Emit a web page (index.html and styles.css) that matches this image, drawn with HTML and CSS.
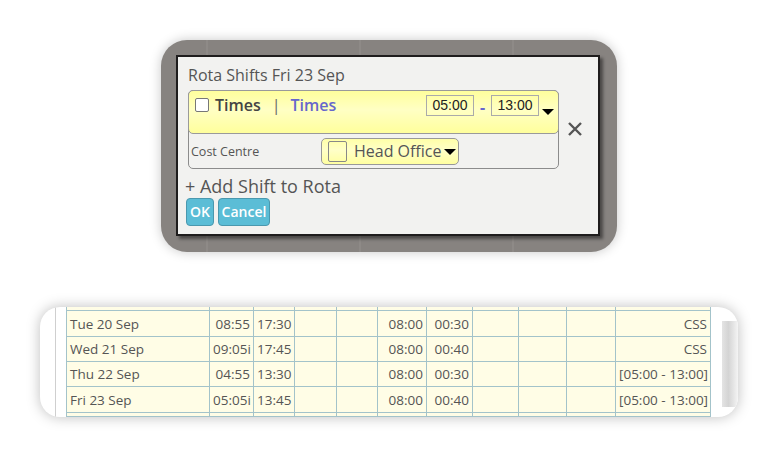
FILE: index.html
```html
<!DOCTYPE html>
<html>
<head>
<meta charset="utf-8">
<link rel="stylesheet" href="styles.css">
</head>
<body>
<div class="stage">
  <div class="frame">
    <div class="dialog">
      <div class="title">Rota Shifts Fri 23 Sep</div>
      <div class="shift-row">
        <div class="shift">
          <div class="shift-head">
            <span class="cb"></span>
            <span class="name">Times</span>
            <span class="sep">|</span>
            <span class="name blue">Times</span>
            <span class="times">
              <span class="tbox">05:00</span><span class="dash">-</span><span class="tbox">13:00</span><span class="arrow"></span>
            </span>
          </div>
          <div class="cost">
            <span class="cost-label">Cost Centre</span>
            <span class="select"><span class="cb big"></span><span class="sel-text">Head Office</span><span class="arrow sel-arrow"></span></span>
          </div>
        </div>
        <svg class="close" width="16" height="16" viewBox="0 0 16 16"><path d="M2 2 L14 14 M14 2 L2 14" stroke="#555" stroke-width="2.4" stroke-linecap="butt" fill="none"/></svg>
      </div>
      <div class="add">+ Add Shift to Rota</div>
      <div class="buttons"><span class="btn ok">OK</span><span class="btn cancel">Cancel</span></div>
    </div>
  </div>

  <div class="sheet">
    <div class="gutter"></div>
    <table class="grid">
      <colgroup>
        <col style="width:143px"><col style="width:44px"><col style="width:41px"><col style="width:42px"><col style="width:41px"><col style="width:49px"><col style="width:46px"><col style="width:46px"><col style="width:48px"><col style="width:49px"><col style="width:95px">
      </colgroup>
      <tr class="part top"><td></td><td></td><td></td><td></td><td></td><td></td><td></td><td></td><td></td><td></td><td></td></tr>
      <tr class="tall"><td class="d">Tue 20 Sep</td><td>08:55</td><td>17:30</td><td></td><td></td><td>08:00</td><td>00:30</td><td></td><td></td><td></td><td>CSS</td></tr>
      <tr><td class="d">Wed 21 Sep</td><td>09:05i</td><td>17:45</td><td></td><td></td><td>08:00</td><td>00:40</td><td></td><td></td><td></td><td>CSS</td></tr>
      <tr><td class="d">Thu 22 Sep</td><td>04:55</td><td>13:30</td><td></td><td></td><td>08:00</td><td>00:30</td><td></td><td></td><td></td><td>[05:00 - 13:00]</td></tr>
      <tr class="tall"><td class="d">Fri 23 Sep</td><td>05:05i</td><td>13:45</td><td></td><td></td><td>08:00</td><td>00:40</td><td></td><td></td><td></td><td>[05:00 - 13:00]</td></tr>
      <tr class="part"><td></td><td></td><td></td><td></td><td></td><td></td><td></td><td></td><td></td><td></td><td></td></tr>
    </table>
    <div class="rspace"></div>
    <div class="band"></div>
  </div>
</div>
</body>
</html>
```
FILE: styles.css
```css
html, body {
  margin: 0;
  padding: 0;
  background: #ffffff;
}
body {
  width: 779px;
  height: 457px;
  overflow: hidden;
  font-family: "Open Sans", "DejaVu Sans", sans-serif;
  color: #555;
}
.stage {
  display: flex;
  flex-direction: column;
  padding-top: 40px;
}
.frame {
  margin-left: 161px;
  width: 456px;
  height: 212px;
  box-sizing: border-box;
  padding: 15px 0 0 15px;
  background-color: #878380;
  background-image: repeating-linear-gradient(to right, transparent 0 45px, rgba(255,255,255,0.06) 45px 47px, transparent 47px 153px);
  border-radius: 26px;
  box-shadow: 0 0 12px rgba(0,0,0,0.22);
}
.dialog {
  width: 424px;
  height: 181px;
  box-sizing: border-box;
  border: 2px solid #1f1d1d;
  background: #f2f2f0;
  padding: 8px 0 0 10px;
  box-shadow: 3px 3px 3px rgba(0,0,0,0.45);
  display: flex;
  flex-direction: column;
  align-items: flex-start;
}
.title {
  font-size: 16px;
  line-height: 21px;
  color: #555;
}
.shift-row {
  margin-top: 4px;
  display: flex;
  align-items: flex-start;
}
.shift {
  width: 371px;
  height: 79px;
  box-sizing: border-box;
  border: 1px solid #8c8c8c;
  border-radius: 5px;
}
.shift-head {
  margin: -1px -1px 0;
  height: 44px;
  box-sizing: border-box;
  border: 1px solid #9a9a9a;
  border-radius: 5px;
  background: linear-gradient(#ffff9c, #ffffc4 45%, #ffff9c);
  display: flex;
  align-items: flex-start;
  padding: 4px 0 0 6px;
}
.cb {
  width: 12px;
  height: 12px;
  border: 1px solid #777;
  border-radius: 2px;
  background: #fff;
  margin-top: 3px;
  flex: none;
}
.name {
  font-size: 16px;
  line-height: 20px;
  font-weight: 600;
  color: #444;
  margin-left: 6px;
}
.sep {
  font-size: 16px;
  line-height: 20px;
  color: #666;
  margin-left: 11px;
}
.name.blue {
  color: #6666cc;
  margin-left: 10px;
}
.times {
  margin-left: auto;
  display: flex;
  align-items: flex-start;
  padding-right: 4px;
}
.tbox {
  width: 48px;
  height: 21px;
  box-sizing: border-box;
  border: 1px solid #aaa;
  font-family: "Liberation Sans", Arial, sans-serif;
  font-size: 14px;
  line-height: 19px;
  color: #222;
  text-align: center;
}
.dash {
  width: 17px;
  text-align: center;
  font-size: 16px;
  line-height: 20px;
  font-weight: 700;
  color: #6666cc;
  padding-top: 2px;
}
.arrow {
  width: 0;
  height: 0;
  border-left: 6px solid transparent;
  border-right: 6px solid transparent;
  border-top: 6px solid #000;
  margin: 14px 0 0 3px;
}
.cost {
  display: flex;
  align-items: center;
  height: 34px;
}
.cost-label {
  width: 130px;
  padding-left: 2px;
  font-size: 12.5px;
  color: #555;
}
.select {
  height: 27px;
  width: 138px;
  box-sizing: border-box;
  border: 1px solid #999;
  border-radius: 5px;
  background: linear-gradient(#ffffa8, #ffffc8 45%, #ffffa0);
  display: flex;
  align-items: center;
  padding-left: 6px;
}
.cb.big {
  width: 17px;
  height: 19px;
  margin: 0;
  background: transparent;
  border-color: #888;
}
.sel-text {
  font-size: 16px;
  color: #555;
  margin-left: 7px;
  line-height: 20px;
}
.sel-arrow {
  margin: 2px 0 0 2px;
}
.close {
  margin: 31px 0 0 8px;
}
.add {
  font-size: 18px;
  line-height: 22px;
  color: #555;
  margin: 6px 0 0 -3px;
}
.buttons {
  display: flex;
  gap: 4px;
  margin: 1px 0 0 -2px;
}
.btn {
  height: 28px;
  box-sizing: border-box;
  border: 1px solid #4a98ae;
  border-radius: 4px;
  background: #5bbdd6;
  color: #fff;
  font-size: 14px;
  font-weight: 600;
  line-height: 26px;
  text-align: center;
}
.btn.ok { width: 28px; }
.btn.cancel { width: 52px; }

.sheet {
  margin: 55px 0 0 40px;
  width: 698px;
  height: 110px;
  background: #fff;
  border-radius: 20px;
  overflow: hidden;
  box-shadow: 0 0 14px rgba(0,0,0,0.26);
  display: flex;
  align-items: flex-start;
}
.gutter {
  width: 15px;
  height: 100%;
  border-right: 1px solid #cfcfcf;
  flex: none;
}
.grid {
  margin: -1px 0 0 10px;
  width: 645px;
  table-layout: fixed;
  border-collapse: collapse;
  flex: none;
  font-size: 13.5px;
  color: #555;
}
.grid td {
  border: 1px solid #a3c3ca;
  background: #fffde6;
  height: 24px;
  padding: 0 3px;
  text-align: right;
  white-space: nowrap;
  overflow: hidden;
  line-height: 18px;
}
.grid tr.tall td { height: 25px; }
.grid tr.part td { height: 3px; line-height: 3px; }
.grid td.d { text-align: left; }
.rspace {
  width: 11px;
  flex: none;
}
.band {
  width: 16px;
  align-self: stretch;
  margin: 14px 0 10px;
  background: linear-gradient(to right, #e4e4e4, #d4d4d4 40%, #f4f4f4);
  flex: none;
}
```
